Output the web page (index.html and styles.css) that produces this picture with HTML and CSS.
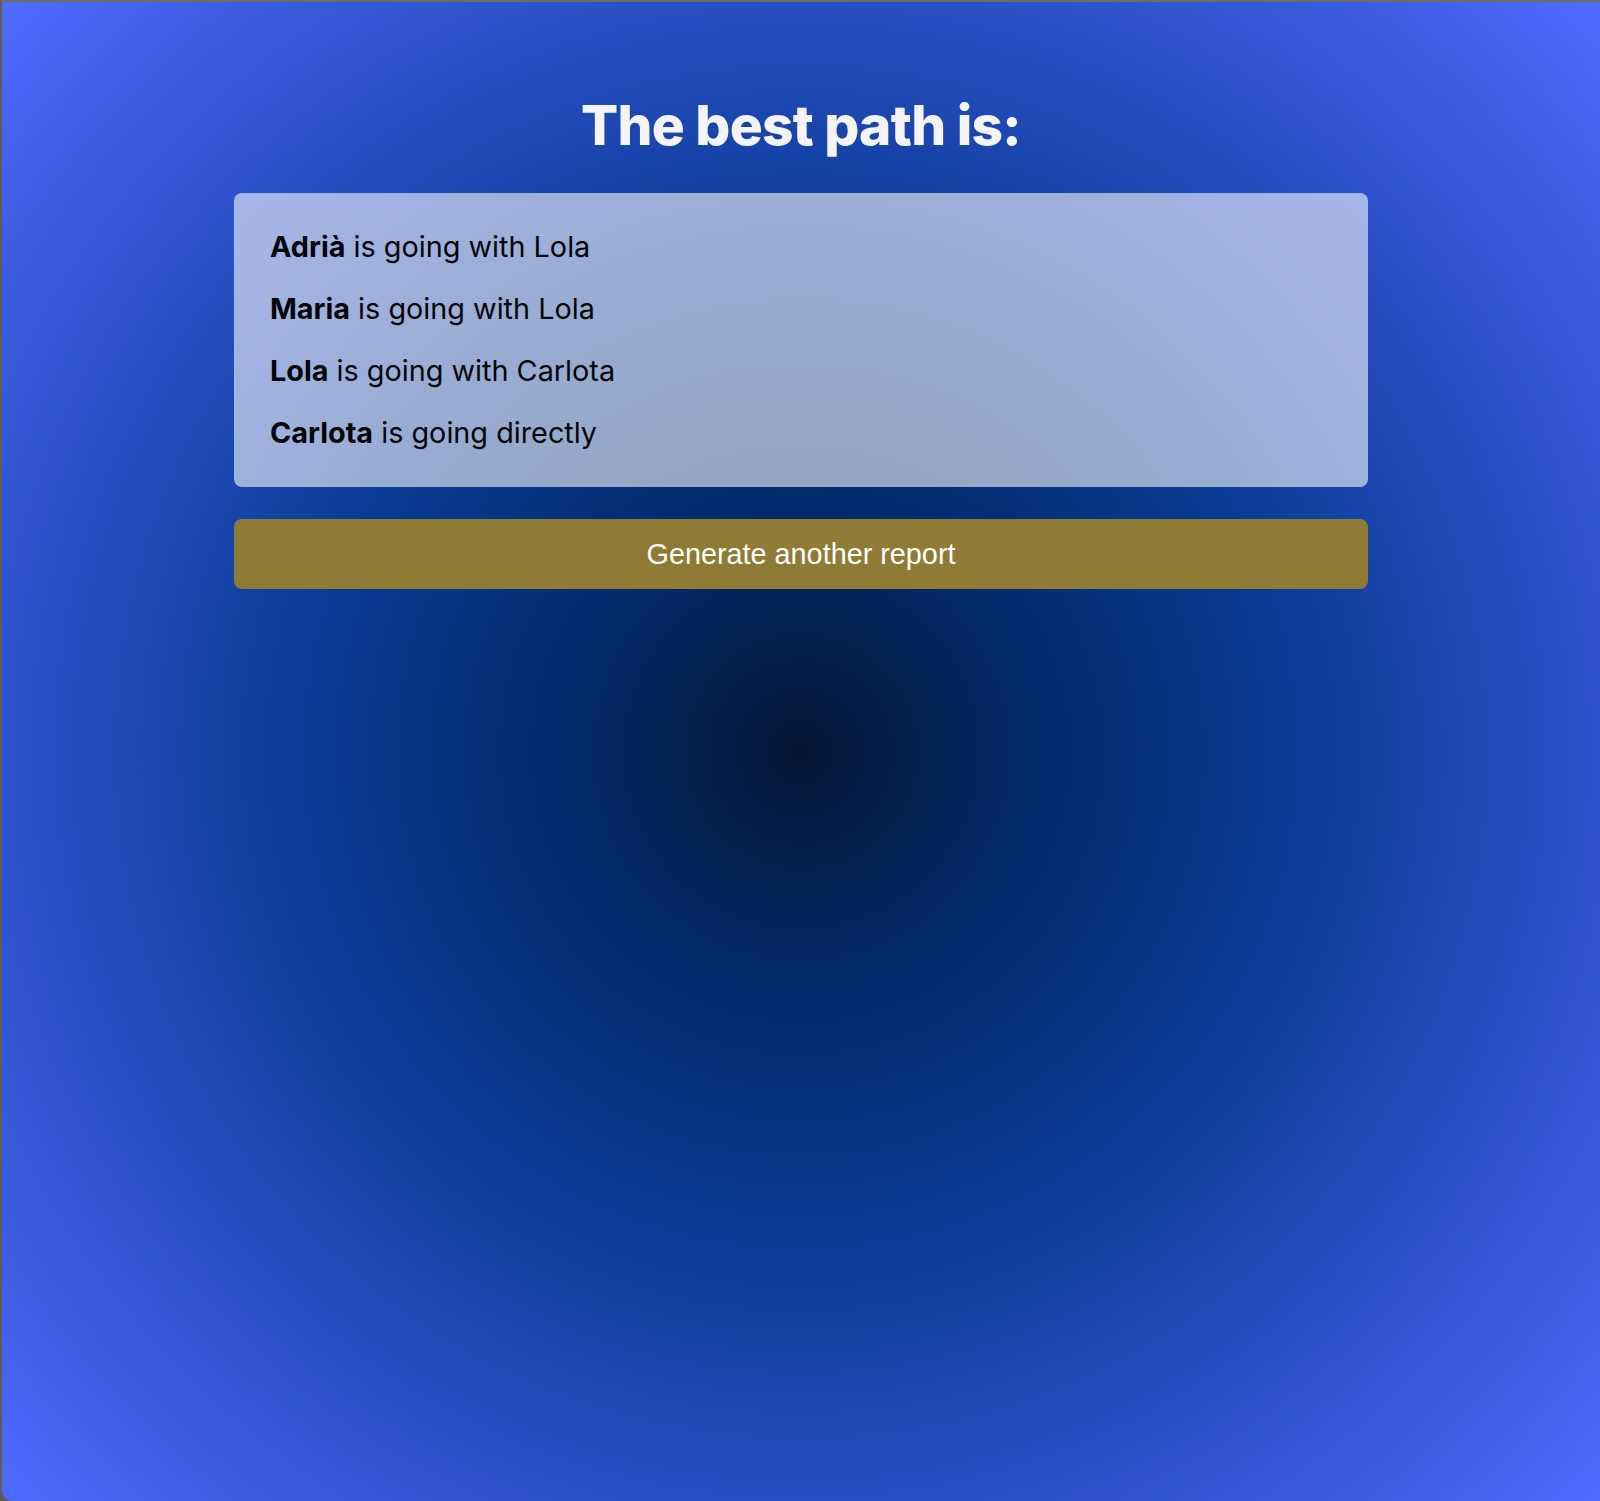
FILE: index.html
```html
<!DOCTYPE html>
<html lang="en">
<head>
<meta charset="utf-8">
<title>The best path</title>
<link rel="stylesheet" href="styles.css">
</head>
<body>
<div class="window">
  <main class="content">
    <h1 class="title">The best path is:</h1>
    <section class="card">
      <p class="row"><strong>Adrià</strong> is going with Lola</p>
      <p class="row"><strong>Maria</strong> is going with Lola</p>
      <p class="row"><strong>Lola</strong> is going with Carlota</p>
      <p class="row"><strong>Carlota</strong> is going directly</p>
    </section>
    <button class="btn" type="button">Generate another report</button>
  </main>
</div>
</body>
</html>
```

FILE: styles.css
```css
html, body {
  margin: 0;
  padding: 0;
  background: #5e5b59;
}

.window {
  box-sizing: border-box;
  width: 1600px;
  height: 1501px;
  border-top: 2px solid #6f6b67;
  border-left: 2px solid #5f5d5c;
  border-bottom-left-radius: 12px;
  overflow: hidden;
  background: radial-gradient(circle farthest-corner at 50% 50%,
    #051633 0%,
    #022b6c 22%,
    #0a3b94 45%,
    #2a50c6 70%,
    #4f6bff 100%);
  font-family: Inter, "Noto Sans", sans-serif;
}

.content {
  width: 1134px;
  margin: 0 auto;
  padding-top: 90px;
  display: flex;
  flex-direction: column;
}

.title {
  margin: 0 0 35px;
  text-align: center;
  font-size: 55px;
  font-weight: 800;
  color: #f4f4f6;
  letter-spacing: -0.75px;
}

.card {
  background: rgba(255, 255, 255, 0.58);
  border-radius: 8px;
  padding: 9px 36px;
}

.row {
  margin: 28px 0;
  font-size: 28.8px;
  line-height: 34px;
  color: #050508;
}

.row strong {
  font-weight: 700;
}

.btn {
  margin-top: 32px;
  height: 70px;
  border: none;
  border-radius: 8px;
  background: #8f7b35;
  color: #ffffff;
  font-family: "Liberation Sans", Arial, sans-serif;
  font-size: 28.8px;
  cursor: pointer;
}
```
